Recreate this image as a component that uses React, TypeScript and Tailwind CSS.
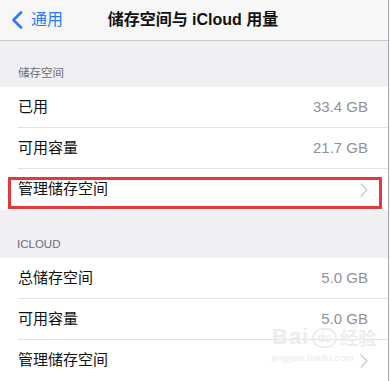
const font = { fontFamily: '"Liberation Sans", "Noto Sans CJK SC", sans-serif' };

function Chevron() {
  return (
    <svg width="8" height="14" viewBox="0 0 8 14" fill="none" className="shrink-0">
      <path d="M1 1l6 6-6 6" stroke="#c7c7cc" strokeWidth="1.3" strokeLinecap="round" strokeLinejoin="round" />
    </svg>
  );
}

type RowProps = { label: string; value?: string; link?: boolean; last?: boolean; marked?: boolean };

function Row({ label, value, link, last, marked }: RowProps) {
  return (
    <div className="relative pl-[18px]">
      <div className={`h-[41px] flex items-center justify-between pr-[20px] ${last ? "" : "border-b border-[#e2e2e5]"}`}>
        <span className="text-[15px] text-[#111]">{label}</span>
        {value && <span className="text-[15px] text-[#919196]">{value}</span>}
        {link && <Chevron />}
      </div>
      {marked && (
        <div className="absolute top-[8px] bottom-[1px] left-[8px] right-[6px] border-[3px] border-[#e4393c]" />
      )}
    </div>
  );
}

export default function App() {
  return (
    <div className="w-[390px] h-[381px] overflow-hidden bg-[#f4f4f6]" style={font}>
      <div className="w-[389px] h-full bg-[#efeff4] border-r border-[#a8a8ac] relative">
        {/* nav bar */}
        <div className="h-[41px] bg-[#f7f7f8] border-b border-[#c8c7cc] grid grid-cols-[100px_1fr_100px] items-center">
          <div className="flex items-center gap-[8px] pl-[11px] text-[#2a7bf3]">
            <svg width="12" height="18" viewBox="0 0 12 18" fill="none">
              <path d="M10 1.5L2.5 9l7.5 7.5" stroke="#2a7bf3" strokeWidth="2.6" strokeLinecap="round" strokeLinejoin="round" />
            </svg>
            <span className="text-[16px]">通用</span>
          </div>
          <div className="text-center text-[16px] font-semibold text-[#111] whitespace-nowrap -ml-[2px]">储存空间与 iCloud 用量</div>
          <div />
        </div>

        {/* storage */}
        <div className="h-[46px] flex items-end pl-[18px] pb-[5px] text-[11.5px] text-[#6d6d72]">储存空间</div>
        <div className="bg-white">
          <Row label="已用" value="33.4 GB" />
          <Row label="可用容量" value="21.7 GB" />
          <Row label="管理储存空间" link last marked />
        </div>

        {/* icloud */}
        <div className="h-[48px] flex items-end pl-[17px] pb-[5px] text-[11.5px] text-[#6d6d72]">ICLOUD</div>
        <div className="bg-white">
          <Row label="总储存空间" value="5.0 GB" />
          <Row label="可用容量" value="5.0 GB" />
          <Row label="管理储存空间" link last />
        </div>

        {/* watermark */}
        <div className="absolute left-[272px] top-[326px] pointer-events-none select-none">
          <div className="flex items-end gap-[3px] text-[#ececef] leading-none">
            <span className="text-[22px] font-bold tracking-[1px]">Bai</span>
            <span className="text-[12px] font-bold border-2 border-[#ececef] rounded-full px-[3px] py-[2px]">du</span>
            <span className="text-[18px] font-bold">经验</span>
          </div>
          <div className="text-[9.5px] text-[#e8e8eb] mt-[3px] tracking-[0.3px]">jingyan.baidu.com</div>
        </div>
      </div>
    </div>
  );
}
